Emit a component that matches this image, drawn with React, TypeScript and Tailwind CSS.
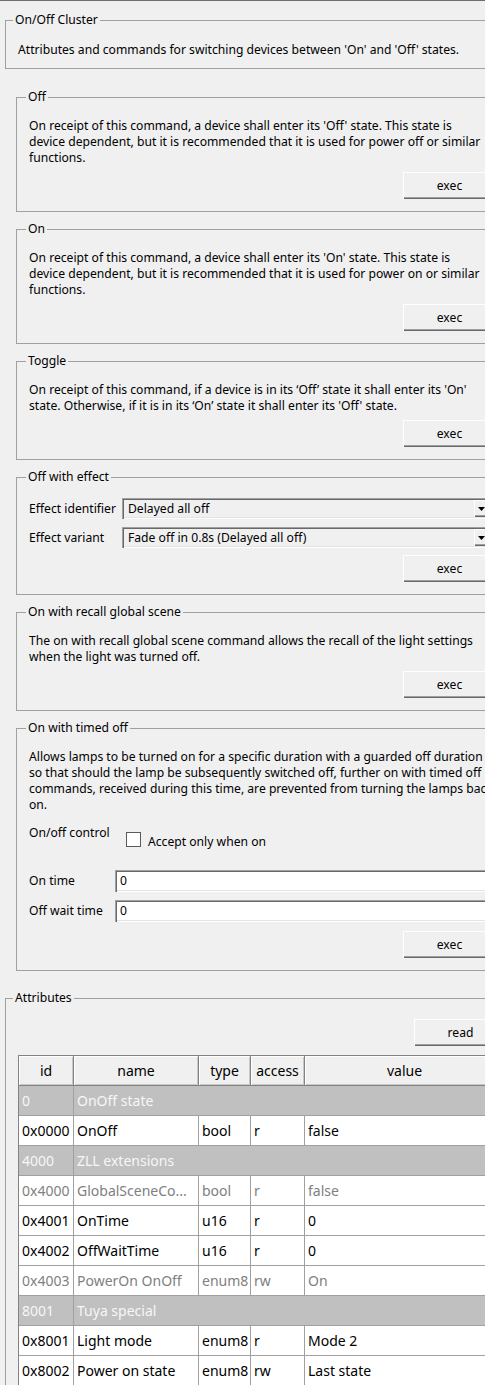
import type { ReactNode } from 'react'

type Row =
  | { kind: 'group'; id: string; name: string }
  | { kind: 'attr'; id: string; name: string; type: string; access: string; value: string; disabled?: boolean }

const rows: Row[] = [
  { kind: 'group', id: '0', name: 'OnOff state' },
  { kind: 'attr', id: '0x0000', name: 'OnOff', type: 'bool', access: 'r', value: 'false' },
  { kind: 'group', id: '4000', name: 'ZLL extensions' },
  { kind: 'attr', id: '0x4000', name: 'GlobalSceneCo...', type: 'bool', access: 'r', value: 'false', disabled: true },
  { kind: 'attr', id: '0x4001', name: 'OnTime', type: 'u16', access: 'r', value: '0' },
  { kind: 'attr', id: '0x4002', name: 'OffWaitTime', type: 'u16', access: 'r', value: '0' },
  { kind: 'attr', id: '0x4003', name: 'PowerOn OnOff', type: 'enum8', access: 'rw', value: 'On', disabled: true },
  { kind: 'group', id: '8001', name: 'Tuya special' },
  { kind: 'attr', id: '0x8001', name: 'Light mode', type: 'enum8', access: 'r', value: 'Mode 2' },
  { kind: 'attr', id: '0x8002', name: 'Power on state', type: 'enum8', access: 'rw', value: 'Last state' },
]

const raised =
  'bg-[#f0f0f0] shadow-[inset_1px_1px_0_#ffffff,inset_-1px_-1px_0_#696969,inset_-2px_-2px_0_#a0a0a0]'
const sunken =
  'shadow-[inset_1px_1px_0_#a0a0a0,inset_2px_2px_0_#696969,inset_-1px_-1px_0_#ffffff,inset_-2px_-2px_0_#e3e3e3]'

function Group({ title, inner, className = '', children }: { title: string; inner?: boolean; className?: string; children: ReactNode }) {
  return (
    <fieldset className={`border border-[#a0a0a0] ${className}`}>
      <legend className={`${inner ? 'ml-[9px]' : 'ml-[7px]'} px-[2px] leading-[16px]`}>{title}</legend>
      {children}
    </fieldset>
  )
}

function Button({ label, className = '' }: { label: string; className?: string }) {
  return (
    <div className={`w-[93px] h-[27px] flex items-center justify-center ${raised} ${className}`}>{label}</div>
  )
}

function Lines({ lines }: { lines: string[] }) {
  return (
    <div>
      {lines.map((l) => (
        <div key={l} className="whitespace-nowrap h-[16px]">
          {l}
        </div>
      ))}
    </div>
  )
}

function Command({ title, lines, className = '' }: { title: string; lines: string[]; className?: string }) {
  return (
    <Group title={title} inner className={className}>
      <div className="pt-[13px] pb-[12px] pl-[12px]">
        <Lines lines={lines} />
        <Button label="exec" className="mt-[6px] ml-[374px]" />
      </div>
    </Group>
  )
}

function Combo({ value }: { value: string }) {
  return (
    <div className={`w-[371px] h-[21px] flex bg-[#f0f0f0] ${sunken}`}>
      <div className="flex-1 pl-[6px] flex items-center whitespace-nowrap">{value}</div>
      <div className={`w-[17px] my-[2px] mr-[2px] flex items-center justify-center ${raised}`}>
        <svg width="7" height="4" viewBox="0 0 7 4" className="-ml-[3px]">
          <path d="M0 0h7L3.5 4z" fill="#000" />
        </svg>
      </div>
    </div>
  )
}

function Input({ value }: { value: string }) {
  return (
    <div className={`w-[380px] h-[22px] bg-white flex items-center pl-[5px] ${sunken}`}>{value}</div>
  )
}

const gridLine = 'border-[#a0a0a0]'
const cols = ['w-[55px]', 'w-[125px]', 'w-[52px]', 'w-[54px]', 'w-[200px]']

export default function App() {
  return (
    <div className="w-[485px] h-[1385px] overflow-hidden bg-[#f0f0f0] border-t border-[#6e6e6e] text-black text-[12.15px] leading-[16px] font-['Noto_Sans',sans-serif]">
      <div className="w-[530px]">
        <Group title="On/Off Cluster" className="ml-[5px] mt-[11px] w-[510px]">
          <div className="pt-[14px] pb-[10px] pl-[12px] whitespace-nowrap">
            Attributes and commands for switching devices between 'On' and 'Off' states.
          </div>
        </Group>

        <div className="ml-[16px] mt-[20px] w-[505px] flex flex-col gap-[9px]">
          <Command
            title="Off"
            lines={[
              "On receipt of this command, a device shall enter its 'Off' state. This state is",
              'device dependent, but it is recommended that it is used for power off or similar',
              'functions.',
            ]}
          />
          <Command
            title="On"
            lines={[
              "On receipt of this command, a device shall enter its 'On' state. This state is",
              'device dependent, but it is recommended that it is used for power on or similar',
              'functions.',
            ]}
          />
          <Command
            title="Toggle"
            lines={[
              "On receipt of this command, if a device is in its ‘Off’ state it shall enter its 'On'",
              "state. Otherwise, if it is in its ‘On’ state it shall enter its 'Off' state.",
            ]}
          />

          <Group title="Off with effect" inner>
            <div className="pt-[13px] pb-[12px] pl-[12px]">
              <div className="flex items-center">
                <div className="w-[93px] whitespace-nowrap">Effect identifier</div>
                <Combo value="Delayed all off" />
              </div>
              <div className="flex items-center mt-[8px]">
                <div className="w-[93px] whitespace-nowrap">Effect variant</div>
                <Combo value="Fade off in 0.8s (Delayed all off)" />
              </div>
              <Button label="exec" className="mt-[7px] ml-[374px]" />
            </div>
          </Group>

          <Command
            title="On with recall global scene"
            lines={[
              'The on with recall global scene command allows the recall of the light settings',
              'when the light was turned off.',
            ]}
          />

          <Group title="On with timed off" inner>
            <div className="pt-[13px] pb-[12px] pl-[12px]">
              <Lines
                lines={[
                  'Allows lamps to be turned on for a specific duration with a guarded off duration',
                  'so that should the lamp be subsequently switched off, further on with timed off',
                  'commands, received during this time, are prevented from turning the lamps back',
                  'on.',
                ]}
              />
              <div className="flex items-start mt-[12px]">
                <div className="w-[97px] whitespace-nowrap">On/off control</div>
                <div className="pt-[7px] flex items-start">
                  <div className="w-[15px] h-[15px] bg-white border border-[#5a5a5a]" />
                  <div className="ml-[7px] mt-[2px] whitespace-nowrap">Accept only when on</div>
                </div>
              </div>
              <div className="flex items-center mt-[20px]">
                <div className="w-[86px] whitespace-nowrap">On time</div>
                <Input value="0" />
              </div>
              <div className="flex items-center mt-[8px]">
                <div className="w-[86px] whitespace-nowrap">Off wait time</div>
                <Input value="0" />
              </div>
              <Button label="exec" className="mt-[9px] ml-[374px]" />
            </div>
          </Group>
        </div>

        <Group title="Attributes" className="ml-[5px] mt-[19px] w-[510px] h-[420px]">
          <div className="pt-[13px] pl-[12px]">
            <Button label="read" className="ml-[396px]" />
            <div className="mt-[9px] border-t border-l border-[#828282] bg-white text-[14px] w-[500px]">
              <div className="flex h-[30px]">
                {['id', 'name', 'type', 'access', 'value'].map((h, i) => (
                  <div
                    key={h}
                    className={`${cols[i]} h-[30px] flex items-center justify-center bg-[#f0f0f0] border-r border-b border-[#828282] shadow-[inset_1px_1px_0_#ffffff,inset_-1px_-1px_0_#c8c8c8]`}
                  >
                    {h}
                  </div>
                ))}
              </div>
              {rows.map((r) =>
                r.kind === 'group' ? (
                  <div key={r.id} className={`flex h-[30px] bg-[#c0c0c0] text-[#f7f7f7] border-b ${gridLine}`}>
                    <div className={`${cols[0]} border-r ${gridLine} pl-[3px] flex items-center`}>{r.id}</div>
                    <div className="flex-1 pl-[3px] flex items-center whitespace-nowrap">{r.name}</div>
                  </div>
                ) : (
                  <div
                    key={r.id}
                    className={`flex h-[30px] border-b ${gridLine} ${r.disabled ? 'text-[#808080]' : 'text-black'}`}
                  >
                    {[r.id, r.name, r.type, r.access, r.value].map((v, i) => (
                      <div
                        key={i}
                        className={`${cols[i]} ${i < 4 ? `border-r ${gridLine}` : ''} pl-[3px] flex items-center whitespace-nowrap overflow-hidden`}
                      >
                        {v}
                      </div>
                    ))}
                  </div>
                ),
              )}
            </div>
          </div>
        </Group>
      </div>
    </div>
  )
}
